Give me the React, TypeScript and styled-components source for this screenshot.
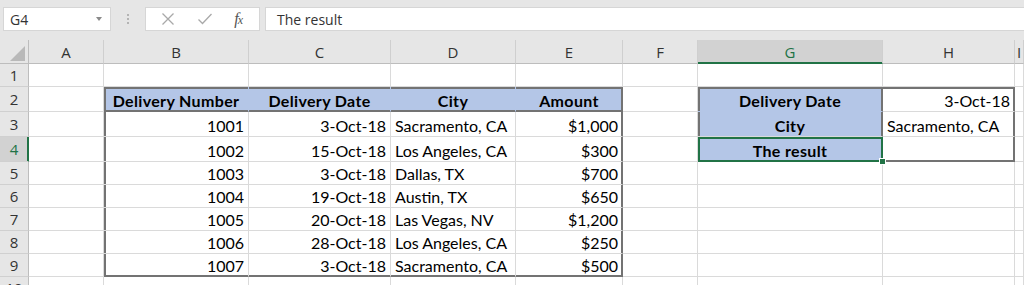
import React from 'react';
import styled, { createGlobalStyle } from 'styled-components';

const GREEN = '#217346';
const GRID = '#dadada';
const EDGE = '#737373';
const FILL = '#b4c6e7';
const HEAD_BG = '#e6e6e6';
const HEAD_ACTIVE = '#d2d2d2';

// row header, then A..H; column I takes what is left
const COLS = [29, 75, 145, 142, 125, 107, 75, 185, 132];
const LETTERS = ['A', 'B', 'C', 'D', 'E', 'F', 'G', 'H', 'I'];
const ROW_HEIGHTS = [23, 25, 25, 25, 23, 23, 23, 23, 23, 23];
const ACTIVE_COL = 6;
const ACTIVE_ROW = 4;

type Align = 'left' | 'center' | 'right';
type Edges = { t?: boolean; r?: boolean; b?: boolean; l?: boolean };
type CellSpec = {
  text?: string;
  bold?: boolean;
  align?: Align;
  fill?: boolean;
  edges?: Edges;
  selected?: boolean;
  hideR?: boolean;
  hideB?: boolean;
};

const deliveries = [
  ['1001', '3-Oct-18', 'Sacramento, CA', '$1,000'],
  ['1002', '15-Oct-18', 'Los Angeles, CA', '$300'],
  ['1003', '3-Oct-18', 'Dallas, TX', '$700'],
  ['1004', '19-Oct-18', 'Austin, TX', '$650'],
  ['1005', '20-Oct-18', 'Las Vegas, NV', '$1,200'],
  ['1006', '28-Oct-18', 'Los Angeles, CA', '$250'],
  ['1007', '3-Oct-18', 'Sacramento, CA', '$500'],
];

// sheet[row][col], row 1..10, col 0..8 (A..I)
const buildSheet = (): Record<number, Record<number, CellSpec>> => {
  const sheet: Record<number, Record<number, CellSpec>> = {};
  const put = (r: number, c: number, spec: CellSpec) => {
    sheet[r] = sheet[r] || {};
    sheet[r][c] = spec;
  };

  const heads = ['Delivery Number', 'Delivery Date', 'City', 'Amount'];
  heads.forEach((h, i) => {
    put(2, i + 1, {
      text: h,
      bold: true,
      align: 'center',
      fill: true,
      hideR: i < 3,
      edges: { t: true, b: true, l: i === 0, r: i === 3 },
    });
  });

  const aligns: Align[] = ['right', 'right', 'left', 'right'];
  deliveries.forEach((row, ri) => {
    const r = ri + 3;
    row.forEach((v, i) => {
      put(r, i + 1, {
        text: v,
        align: aligns[i],
        edges: { l: i === 0, r: i === 3, b: r === 9 },
      });
    });
  });

  put(2, 6, { text: 'Delivery Date', bold: true, align: 'center', fill: true, hideB: true, edges: { t: true, l: true, r: true } });
  put(3, 6, { text: 'City', bold: true, align: 'center', fill: true, edges: { l: true, r: true } });
  put(4, 6, { text: 'The result', bold: true, align: 'center', fill: true, selected: true });
  put(2, 7, { text: '3-Oct-18', align: 'right', edges: { t: true, r: true } });
  put(3, 7, { text: 'Sacramento, CA', align: 'left', edges: { r: true } });
  put(4, 7, { edges: { r: true, b: true } });

  return sheet;
};

const SHEET = buildSheet();

const GlobalStyle = createGlobalStyle`
  html, body {
    margin: 0;
    padding: 0;
    background: #ffffff;
  }
  body {
    font-family: "Open Sans", "Liberation Sans", sans-serif;
  }
`;

const Page = styled.div`
  width: 1024px;
  height: 285px;
  overflow: hidden;
  background: #ffffff;
`;

const FormulaBar = styled.div`
  display: flex;
  align-items: flex-start;
  height: 40px;
  box-sizing: border-box;
  padding: 7px 0 0 3px;
  background: ${HEAD_BG};
`;

const NameBox = styled.div`
  display: flex;
  align-items: center;
  justify-content: space-between;
  width: 108px;
  height: 24px;
  box-sizing: border-box;
  padding: 0 8px 0 6px;
  background: #ffffff;
  border: 1px solid #d6d6d6;
  font-size: 14px;
  color: #333333;
`;

const Caret = styled.span`
  width: 0;
  height: 0;
  border-left: 3px solid transparent;
  border-right: 3px solid transparent;
  border-top: 4px solid #8a8a8a;
`;

const Grip = styled.div`
  display: flex;
  flex-direction: column;
  align-items: center;
  justify-content: center;
  gap: 2px;
  width: 34px;
  height: 24px;

  span {
    width: 2px;
    height: 2px;
    background: #b4b4b4;
  }
`;

const FxBox = styled.div`
  display: flex;
  align-items: center;
  justify-content: space-around;
  width: 115px;
  height: 24px;
  box-sizing: border-box;
  padding: 0 6px 0 4px;
  background: #ffffff;
  border: 1px solid #d6d6d6;
`;

const FxLabel = styled.span`
  font-family: "Liberation Serif", "DejaVu Serif", serif;
  font-style: italic;
  font-size: 16px;
  color: #555555;
  letter-spacing: -1px;

  small {
    font-size: 12px;
  }
`;

const FormulaInput = styled.div`
  flex: 1;
  display: flex;
  align-items: center;
  height: 24px;
  margin-left: 5px;
  box-sizing: border-box;
  padding-left: 11px;
  background: #ffffff;
  border: 1px solid #d6d6d6;
  border-right: none;
  font-size: 14px;
  color: #333333;
`;

const Sheet = styled.div`
  display: grid;
  grid-template-columns: ${COLS.map((w) => `${w}px`).join(' ')} 1fr;
  grid-template-rows: 24px ${ROW_HEIGHTS.map((h) => `${h}px`).join(' ')};
`;

const Corner = styled.div`
  display: flex;
  align-items: flex-end;
  justify-content: flex-end;
  padding: 0 3px 2px 0;
  background: ${HEAD_BG};
  border-right: 1px solid #bdbdbd;
  border-bottom: 1px solid #bdbdbd;

  span {
    width: 0;
    height: 0;
    border-left: 15px solid transparent;
    border-bottom: 15px solid #b9b9b9;
  }
`;

const ColHead = styled.div<{ $active?: boolean }>`
  display: flex;
  align-items: center;
  justify-content: center;
  background: ${(p) => (p.$active ? HEAD_ACTIVE : HEAD_BG)};
  border-right: 1px solid #cfcfcf;
  border-bottom: 1px solid ${(p) => (p.$active ? GREEN : '#bdbdbd')};
  box-shadow: ${(p) => (p.$active ? `inset 0 -1px 0 ${GREEN}` : 'none')};
  font-size: 15px;
  color: ${(p) => (p.$active ? GREEN : '#333333')};
`;

const RowHead = styled.div<{ $active?: boolean }>`
  display: flex;
  align-items: center;
  justify-content: center;
  background: ${(p) => (p.$active ? HEAD_ACTIVE : HEAD_BG)};
  border-right: 1px solid ${(p) => (p.$active ? GREEN : '#bdbdbd')};
  border-bottom: 1px solid #d0d0d0;
  box-shadow: ${(p) => (p.$active ? `inset -1px 0 0 ${GREEN}` : 'none')};
  font-size: 15px;
  color: ${(p) => (p.$active ? GREEN : '#333333')};
`;

type CellProps = {
  $align: Align;
  $bold?: boolean;
  $fill?: boolean;
  $edges?: Edges;
  $selected?: boolean;
  $hideR?: boolean;
  $hideB?: boolean;
};

const edgeShadow = (p: CellProps) => {
  const c = p.$selected ? GREEN : EDGE;
  const e: Edges = p.$selected ? { t: true, r: true, b: true, l: true } : p.$edges ?? {};
  const list: string[] = [];
  if (e.t) list.push(`inset 0 2px 0 ${c}`);
  if (e.l) list.push(`inset 2px 0 0 ${c}`);
  if (e.r) list.push(`inset -1px 0 0 ${c}`);
  if (e.b) list.push(`inset 0 -1px 0 ${c}`);
  return list.length ? list.join(', ') : 'none';
};

const lineColor = (p: CellProps, edge: boolean | undefined, hide: boolean | undefined) => {
  if (p.$selected) return GREEN;
  if (edge) return EDGE;
  if (hide && p.$fill) return FILL;
  return GRID;
};

const Cell = styled.div<CellProps>`
  position: relative;
  display: flex;
  align-items: flex-end;
  justify-content: ${(p) =>
    p.$align === 'center' ? 'center' : p.$align === 'right' ? 'flex-end' : 'flex-start'};
  min-width: 0;
  padding: 0 4px 0 4px;
  background: ${(p) => (p.$fill ? FILL : '#ffffff')};
  border-right: 1px solid ${(p) => lineColor(p, p.$edges?.r, p.$hideR)};
  border-bottom: 1px solid ${(p) => lineColor(p, p.$edges?.b, p.$hideB)};
  box-shadow: ${edgeShadow};
  font-family: Lato, "Liberation Sans", sans-serif;
  font-size: 16px;
  font-weight: ${(p) => (p.$bold ? 700 : 400)};
  letter-spacing: ${(p) => (p.$bold ? '0.35px' : '0')};
  line-height: 20px;
  color: #000000;
  white-space: nowrap;
`;

const FillHandle = styled.span`
  position: absolute;
  right: -4px;
  bottom: -4px;
  z-index: 2;
  width: 5px;
  height: 5px;
  background: ${GREEN};
  border: 1px solid #ffffff;
`;

const CrossIcon = () => (
  <svg width="14" height="14" viewBox="0 0 14 14">
    <path d="M1.5 1.5 L12.5 12.5 M12.5 1.5 L1.5 12.5" stroke="#a9a9a9" strokeWidth="1.3" fill="none" />
  </svg>
);

const CheckIcon = () => (
  <svg width="16" height="14" viewBox="0 0 16 14">
    <path d="M1.5 7.5 L5.5 11.5 L14.5 2" stroke="#a9a9a9" strokeWidth="1.3" fill="none" />
  </svg>
);

const App = () => {
  return (
    <Page>
      <GlobalStyle />
      <FormulaBar>
        <NameBox>
          G4
          <Caret />
        </NameBox>
        <Grip>
          <span />
          <span />
          <span />
        </Grip>
        <FxBox>
          <CrossIcon />
          <CheckIcon />
          <FxLabel>
            f<small>x</small>
          </FxLabel>
        </FxBox>
        <FormulaInput>The result</FormulaInput>
      </FormulaBar>

      <Sheet>
        <Corner>
          <span />
        </Corner>
        {LETTERS.map((l, i) => (
          <ColHead key={l} $active={i === ACTIVE_COL}>
            {l}
          </ColHead>
        ))}

        {ROW_HEIGHTS.map((_, ri) => {
          const r = ri + 1;
          return (
            <React.Fragment key={r}>
              <RowHead $active={r === ACTIVE_ROW}>{r}</RowHead>
              {LETTERS.map((l, c) => {
                const spec = SHEET[r]?.[c] ?? {};
                return (
                  <Cell
                    key={l}
                    $align={spec.align ?? 'left'}
                    $bold={spec.bold}
                    $fill={spec.fill}
                    $edges={spec.edges}
                    $selected={spec.selected}
                    $hideR={spec.hideR}
                    $hideB={spec.hideB}
                  >
                    {spec.text}
                    {spec.selected && <FillHandle />}
                  </Cell>
                );
              })}
            </React.Fragment>
          );
        })}
      </Sheet>
    </Page>
  );
};

export default App;
